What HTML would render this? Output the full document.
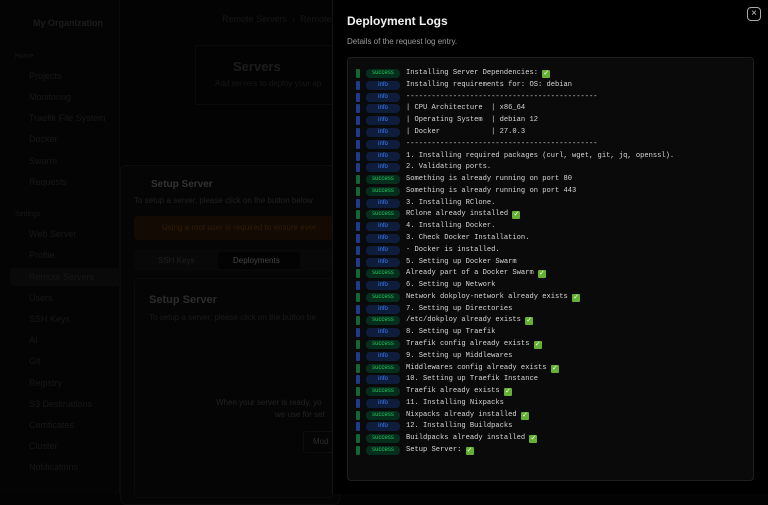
<!DOCTYPE html>
<html><head><meta charset="utf-8"><style>
*{box-sizing:border-box;margin:0;padding:0}
body{width:768px;height:494px;overflow:hidden;background:#030303;font-family:"Liberation Sans",sans-serif;position:relative}
.a{position:absolute;white-space:nowrap}
.sb{color:#171717;font-size:9px}
.panel{position:absolute;left:332px;top:0;width:436px;height:494px;background:#000;border-left:1px solid #141414}
.box{position:absolute;left:14px;top:57px;width:407px;height:424px;background:#0a0a0a;border:1px solid #1f1f1f;border-radius:4px}
.row{position:absolute;left:8px;width:395px;height:10px;font-family:"Liberation Mono",monospace;font-size:7.1px;color:#d8d8d8;line-height:10px;white-space:pre}
.bar{position:absolute;left:0;top:1px;width:4px;height:9px;border-radius:1px}
.bd{position:absolute;left:10px;top:1px;width:34px;height:9px;border-radius:4px;font-size:6px;text-align:center;line-height:9px;font-family:"Liberation Sans",sans-serif}
.s .bar{background:#166534}.s .bd{background:#052e1c;color:#22c55e}
.i .bar{background:#1e3a8a}.i .bd{background:#0f1d3d;color:#3b82f6}
.t{position:absolute;left:50px;top:0;white-space:pre}
.ck{display:inline-block;width:8px;height:8px;background:#65b032;border-radius:1px;color:#fff;font-size:7px;line-height:8px;text-align:center;vertical-align:-1px}
</style></head><body>
<div class="a" style="left:0;top:0;width:120px;height:494px;background:#040404;border-right:1px solid #0a0a0a"></div>
<div class="a sb" style="left:33px;top:18px;font-weight:bold;color:#1c1c1c">My Organization</div>
<div class="a sb" style="left:15px;top:53px;font-size:7px">Home</div>
<div class="a sb" style="left:29px;top:71px">Projects</div>
<div class="a sb" style="left:29px;top:92px">Monitoring</div>
<div class="a sb" style="left:29px;top:113px">Traefik File System</div>
<div class="a sb" style="left:29px;top:134px">Docker</div>
<div class="a sb" style="left:29px;top:156px">Swarm</div>
<div class="a sb" style="left:29px;top:177px">Requests</div>
<div class="a sb" style="left:15px;top:211px;font-size:7px">Settings</div>
<div class="a sb" style="left:29px;top:229px">Web Server</div>
<div class="a sb" style="left:29px;top:250px">Profile</div>
<div class="a" style="left:10px;top:268px;width:110px;height:18px;background:#090909;border-radius:3px"></div>
<div class="a sb" style="left:29px;top:272px">Remote Servers</div>
<div class="a sb" style="left:29px;top:293px">Users</div>
<div class="a sb" style="left:29px;top:314px">SSH Keys</div>
<div class="a sb" style="left:29px;top:335px">AI</div>
<div class="a sb" style="left:29px;top:356px">Git</div>
<div class="a sb" style="left:29px;top:378px">Registry</div>
<div class="a sb" style="left:29px;top:399px">S3 Destinations</div>
<div class="a sb" style="left:29px;top:420px">Certificates</div>
<div class="a sb" style="left:29px;top:441px">Cluster</div>
<div class="a sb" style="left:29px;top:462px">Notifications</div>
<div class="a sb" style="left:222px;top:14px">Remote Servers &nbsp;›&nbsp; Remote</div>
<div class="a" style="left:195px;top:45px;width:140px;height:60px;border:1px solid #0a0a0a"></div>
<div class="a" style="left:233px;top:59px;color:#1c1c1c;font-size:13px;font-weight:bold">Servers</div>
<div class="a sb" style="left:215px;top:79px;font-size:8px">Add servers to deploy your ap</div>
<div class="a" style="left:120px;top:165px;width:220px;height:340px;background:#050505;border:1px solid #0c0c0c;border-radius:6px"></div>
<div class="a" style="left:151px;top:179px;color:#333;font-size:10px;font-weight:bold">Setup Server</div>
<div class="a" style="left:134px;top:196px;color:#202020;font-size:8px">To setup a server, please click on the button below</div>
<div class="a" style="left:134px;top:216px;width:200px;height:24px;background:#120a03;border-radius:4px"></div>
<div class="a" style="left:162px;top:223px;color:#331d06;font-size:8px">Using a root user is required to ensure ever</div>
<div class="a" style="left:134px;top:249px;width:200px;height:22px;background:#080808;border-radius:4px"></div>
<div class="a" style="left:218px;top:252px;width:82px;height:17px;background:#030303;border-radius:3px"></div>
<div class="a" style="left:158px;top:256px;color:#202020;font-size:8px">SSH Keys</div>
<div class="a" style="left:233px;top:256px;color:#444;font-size:8px">Deployments</div>
<div class="a" style="left:134px;top:278px;width:200px;height:220px;border:1px solid #0b0b0b;border-radius:4px"></div>
<div class="a" style="left:149px;top:294px;color:#2c2c2c;font-size:11px;font-weight:bold">Setup Server</div>
<div class="a" style="left:149px;top:313px;color:#1a1a1a;font-size:8px">To setup a server, please click on the button be</div>
<div class="a" style="left:216px;top:398px;color:#222;font-size:8px">When your server is ready, yo</div>
<div class="a" style="left:275px;top:410px;color:#222;font-size:8px">we use for set</div>
<div class="a" style="left:303px;top:431px;width:35px;height:22px;border:1px solid #0e0e0e;border-radius:3px;color:#2c2c2c;font-size:8px;padding:5px 0 0 9px">Mod</div>

<div class="panel">
<div class="a" style="left:14px;top:14px;color:#f2f2f2;font-size:12px;font-weight:bold">Deployment Logs</div>
<div class="a" style="left:14px;top:37px;color:#9a9a9a;font-size:8px">Details of the request log entry.</div>
<div class="a" style="left:414px;top:7px;width:14px;height:14px;border:1px solid #aaa;border-radius:4px;color:#ccc;font-size:10px;line-height:12px;text-align:center">×</div>
<div class="box">
<div class="row s" style="top:10px"><div class="bar"></div><div class="bd">success</div><div class="t">Installing Server Dependencies: <span class="ck">✓</span></div></div>
<div class="row i" style="top:21.8px"><div class="bar"></div><div class="bd">info</div><div class="t">Installing requirements for: OS: debian</div></div>
<div class="row i" style="top:33.6px"><div class="bar"></div><div class="bd">info</div><div class="t">---------------------------------------------</div></div>
<div class="row i" style="top:45.3px"><div class="bar"></div><div class="bd">info</div><div class="t">| CPU Architecture  | x86_64</div></div>
<div class="row i" style="top:57.1px"><div class="bar"></div><div class="bd">info</div><div class="t">| Operating System  | debian 12</div></div>
<div class="row i" style="top:68.9px"><div class="bar"></div><div class="bd">info</div><div class="t">| Docker            | 27.0.3</div></div>
<div class="row i" style="top:80.7px"><div class="bar"></div><div class="bd">info</div><div class="t">---------------------------------------------</div></div>
<div class="row i" style="top:92.5px"><div class="bar"></div><div class="bd">info</div><div class="t">1. Installing required packages (curl, wget, git, jq, openssl).</div></div>
<div class="row i" style="top:104.2px"><div class="bar"></div><div class="bd">info</div><div class="t">2. Validating ports.</div></div>
<div class="row s" style="top:116px"><div class="bar"></div><div class="bd">success</div><div class="t">Something is already running on port 80</div></div>
<div class="row s" style="top:127.8px"><div class="bar"></div><div class="bd">success</div><div class="t">Something is already running on port 443</div></div>
<div class="row i" style="top:139.6px"><div class="bar"></div><div class="bd">info</div><div class="t">3. Installing RClone.</div></div>
<div class="row s" style="top:151.4px"><div class="bar"></div><div class="bd">success</div><div class="t">RClone already installed <span class="ck">✓</span></div></div>
<div class="row i" style="top:163.1px"><div class="bar"></div><div class="bd">info</div><div class="t">4. Installing Docker.</div></div>
<div class="row i" style="top:174.9px"><div class="bar"></div><div class="bd">info</div><div class="t">3. Check Docker Installation.</div></div>
<div class="row i" style="top:186.7px"><div class="bar"></div><div class="bd">info</div><div class="t">- Docker is installed.</div></div>
<div class="row i" style="top:198.5px"><div class="bar"></div><div class="bd">info</div><div class="t">5. Setting up Docker Swarm</div></div>
<div class="row s" style="top:210.3px"><div class="bar"></div><div class="bd">success</div><div class="t">Already part of a Docker Swarm <span class="ck">✓</span></div></div>
<div class="row i" style="top:222px"><div class="bar"></div><div class="bd">info</div><div class="t">6. Setting up Network</div></div>
<div class="row s" style="top:233.8px"><div class="bar"></div><div class="bd">success</div><div class="t">Network dokploy-network already exists <span class="ck">✓</span></div></div>
<div class="row i" style="top:245.6px"><div class="bar"></div><div class="bd">info</div><div class="t">7. Setting up Directories</div></div>
<div class="row s" style="top:257.4px"><div class="bar"></div><div class="bd">success</div><div class="t">/etc/dokploy already exists <span class="ck">✓</span></div></div>
<div class="row i" style="top:269.2px"><div class="bar"></div><div class="bd">info</div><div class="t">8. Setting up Traefik</div></div>
<div class="row s" style="top:280.9px"><div class="bar"></div><div class="bd">success</div><div class="t">Traefik config already exists <span class="ck">✓</span></div></div>
<div class="row i" style="top:292.7px"><div class="bar"></div><div class="bd">info</div><div class="t">9. Setting up Middlewares</div></div>
<div class="row s" style="top:304.5px"><div class="bar"></div><div class="bd">success</div><div class="t">Middlewares config already exists <span class="ck">✓</span></div></div>
<div class="row i" style="top:316.3px"><div class="bar"></div><div class="bd">info</div><div class="t">10. Setting up Traefik Instance</div></div>
<div class="row s" style="top:328.1px"><div class="bar"></div><div class="bd">success</div><div class="t">Traefik already exists <span class="ck">✓</span></div></div>
<div class="row i" style="top:339.8px"><div class="bar"></div><div class="bd">info</div><div class="t">11. Installing Nixpacks</div></div>
<div class="row s" style="top:351.6px"><div class="bar"></div><div class="bd">success</div><div class="t">Nixpacks already installed <span class="ck">✓</span></div></div>
<div class="row i" style="top:363.4px"><div class="bar"></div><div class="bd">info</div><div class="t">12. Installing Buildpacks</div></div>
<div class="row s" style="top:375.2px"><div class="bar"></div><div class="bd">success</div><div class="t">Buildpacks already installed <span class="ck">✓</span></div></div>
<div class="row s" style="top:387px"><div class="bar"></div><div class="bd">success</div><div class="t">Setup Server: <span class="ck">✓</span></div></div>
</div>
</div>
</body></html>
